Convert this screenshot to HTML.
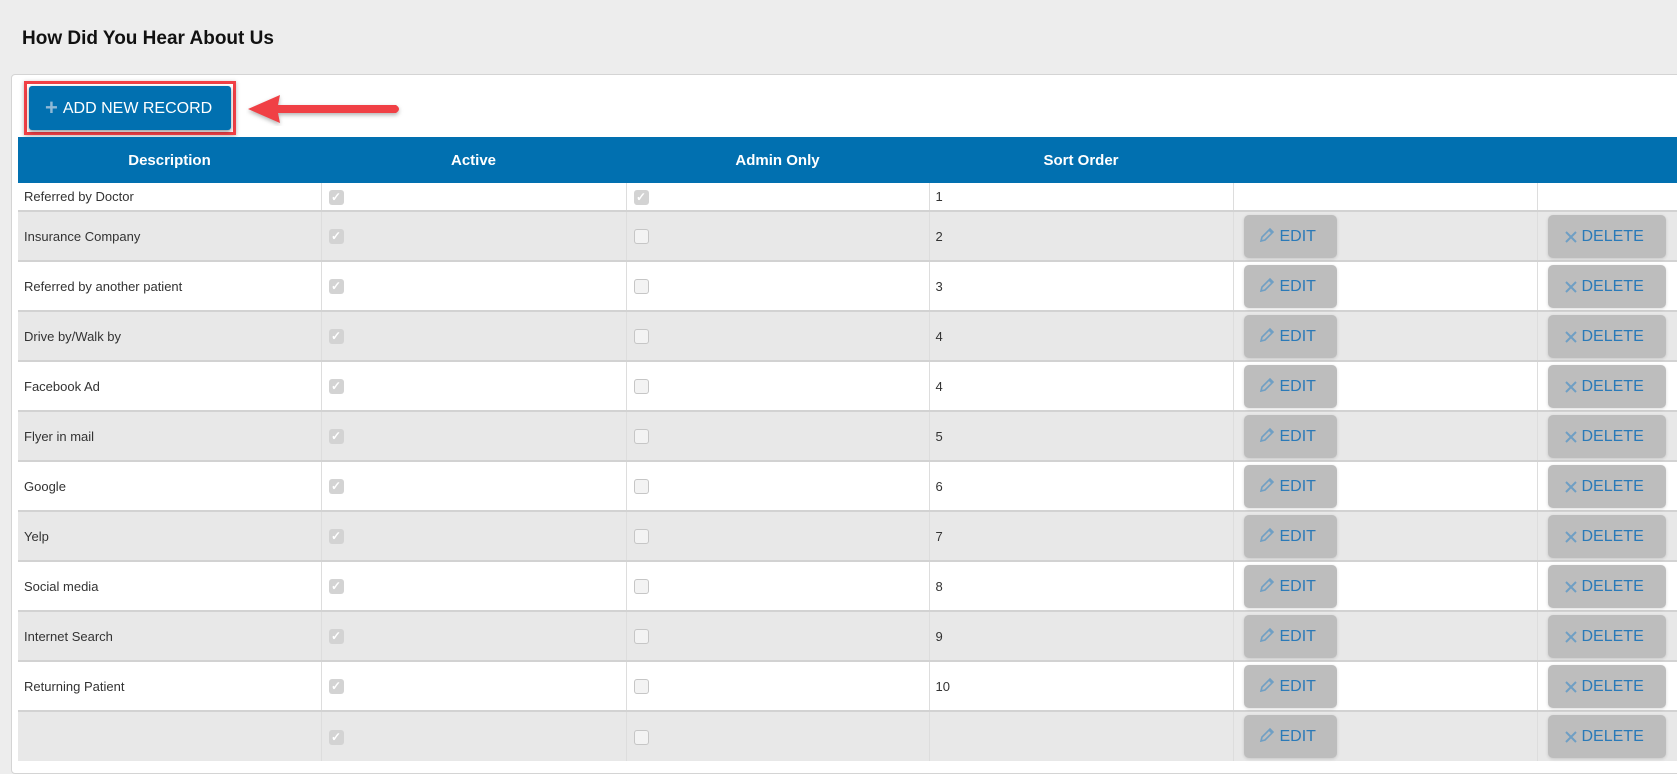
<!DOCTYPE html>
<html><head><meta charset="utf-8"><style>
*{box-sizing:border-box;margin:0;padding:0}
html,body{width:1677px;height:733px;overflow:hidden;background:#ededed;font-family:"Liberation Sans",Arial,sans-serif}
h1{position:absolute;left:22px;top:28px;font-size:19px;font-weight:bold;color:#111}
.panel{position:absolute;left:11px;top:74px;width:1700px;height:700px;background:#fff;border:1px solid #d4d4d4;border-radius:4px}
.red{position:absolute;left:24px;top:81px;width:212px;height:54px;border:3px solid #f04045;box-shadow:0 1px 4px rgba(0,0,0,.3)}
.add{position:absolute;left:29px;top:86px;width:202px;height:44px;background:#0170b0;border-radius:3px;color:#fff;font-size:16px;line-height:44px;padding-left:16px;box-shadow:0 2px 4px rgba(0,0,0,.4)}
.add b{color:#8fb9d6;font-size:22px;vertical-align:-2px;margin-right:5px}
table{position:absolute;left:18px;top:137px;border-collapse:collapse;table-layout:fixed;width:1700px}
th{background:#0170b0;color:#fff;height:46px;font-size:15px;font-weight:bold;text-align:center}
td{font-size:13px;color:#333;border-top:2px solid #d2d2d2;border-left:1px solid #ddd;padding-left:6px;height:50px;vertical-align:middle}
td:first-child{border-left:none}
tr.first td{height:28px;border-top:none}
tr.g td{background:#e8e8e8}
.cb{display:inline-block;width:15px;height:15px;border-radius:3px;background:#d3d3d3;color:#fff;font-size:12px;font-weight:bold;text-align:center;line-height:15px;margin-left:1px;vertical-align:middle}
.cb.u{background:#f3f3f3;border:1px solid #c6c6c6}
.btn{display:inline-block;height:43px;background:#bdbdbd;border-radius:5px;color:#2a7ab8;font-size:16px;line-height:43px;box-shadow:0 1px 3px rgba(0,0,0,.15);margin-left:4px}
.e{width:93px;padding-left:14px}.d{width:118px;padding-left:16px}
.btn svg{vertical-align:-3px;margin-right:4px}
</style></head><body>
<h1>How Did You Hear About Us</h1>
<div class="panel"></div>
<div class="red"></div>
<div class="add"><b>+</b>ADD NEW RECORD</div>
<svg style="position:absolute;left:246px;top:92px" width="160" height="34"><path d="M2 17 L34 3 L32 13 L150 13 Q156 17 150 21 L32 21 L34 31 Z" fill="#f04045" style="filter:drop-shadow(0 2px 2px rgba(0,0,0,.3))"/></svg>
<table id="t">
<colgroup><col style="width:303px"><col style="width:305px"><col style="width:303px"><col style="width:304px"><col style="width:304px"><col></colgroup>
<tr><th>Description</th><th>Active</th><th>Admin Only</th><th>Sort Order</th><th></th><th></th></tr>
<tr class="first"><td>Referred by Doctor</td><td><span class="cb">✓</span></td><td><span class="cb">✓</span></td><td>1</td><td></td><td></td></tr>
</table>
<script>
var d=[["Insurance Company",2],["Referred by another patient",3],["Drive by/Walk by",4],["Facebook Ad",4],["Flyer in mail",5],["Google",6],["Yelp",7],["Social media",8],["Internet Search",9],["Returning Patient",10],["",""]];
var pen='<svg width="18" height="18" viewBox="0 0 18 18"><path d="M3 15 L4 11 L12 3 L15 6 L7 14 Z M11 4 L14 7" fill="none" stroke="#6f9fc4" stroke-width="1.6"/></svg>';
var x='<svg width="14" height="14" viewBox="0 0 14 14"><path d="M2 2 L12 12 M12 2 L2 12" stroke="#6f9fc4" stroke-width="2"/></svg>';
var h='';d.forEach(function(r,i){h+='<tr class="'+(i%2==0?'g':'')+'"><td>'+r[0]+'</td><td><span class="cb">✓</span></td><td><span class="cb u"></span></td><td>'+r[1]+'</td><td><span class="btn e">'+pen+'EDIT</span></td><td><span class="btn d">'+x+'DELETE</span></td></tr>';});
var tb=document.querySelector('#t tbody');tb.insertAdjacentHTML('beforeend',h);
</script>
</body></html>
